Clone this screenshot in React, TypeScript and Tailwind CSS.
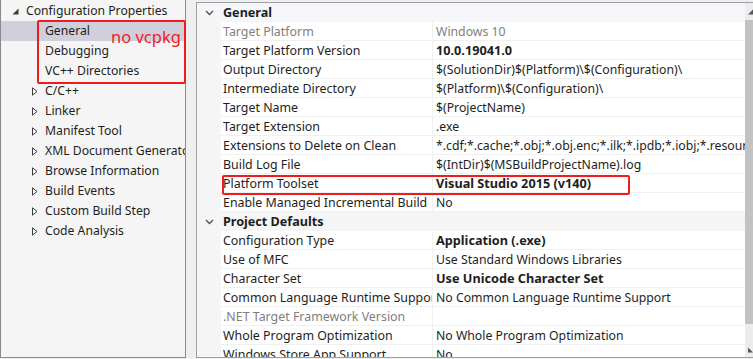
import React from "react";

const font = { fontFamily: '"Noto Sans", "Open Sans", sans-serif' };

function Collapsed() {
  return (
    <svg width="6" height="9" viewBox="0 0 6 9" className="shrink-0">
      <path d="M0.5 0.8 L5 4.5 L0.5 8.2 Z" fill="none" stroke="#3c3c3c" strokeWidth="1" />
    </svg>
  );
}

function Expanded() {
  return (
    <svg width="7" height="7" viewBox="0 0 7 7" className="shrink-0">
      <path d="M6.5 0.5 L6.5 6.5 L0.5 6.5 Z" fill="#3c3c3c" />
    </svg>
  );
}

function Chevron() {
  return (
    <svg width="9" height="6" viewBox="0 0 9 6">
      <path d="M1 1 L4.5 4.5 L8 1" fill="none" stroke="#555" strokeWidth="1.4" />
    </svg>
  );
}

type Row = { name: string; value: string; bold?: boolean; gray?: boolean; mark?: boolean };

const general: Row[] = [
  { name: "Target Platform", value: "Windows 10", gray: true },
  { name: "Target Platform Version", value: "10.0.19041.0", bold: true },
  { name: "Output Directory", value: "$(SolutionDir)$(Platform)\\$(Configuration)\\" },
  { name: "Intermediate Directory", value: "$(Platform)\\$(Configuration)\\" },
  { name: "Target Name", value: "$(ProjectName)" },
  { name: "Target Extension", value: ".exe" },
  { name: "Extensions to Delete on Clean", value: "*.cdf;*.cache;*.obj;*.obj.enc;*.ilk;*.ipdb;*.iobj;*.resources;*.tlb;*.tli;*.tlh;*.tmp" },
  { name: "Build Log File", value: "$(IntDir)$(MSBuildProjectName).log" },
  { name: "Platform Toolset", value: "Visual Studio 2015 (v140)", bold: true, mark: true },
  { name: "Enable Managed Incremental Build", value: "No" },
];

const defaults: Row[] = [
  { name: "Configuration Type", value: "Application (.exe)", bold: true },
  { name: "Use of MFC", value: "Use Standard Windows Libraries" },
  { name: "Character Set", value: "Use Unicode Character Set", bold: true },
  { name: "Common Language Runtime Support", value: "No Common Language Runtime Support" },
  { name: ".NET Target Framework Version", value: "", gray: true },
  { name: "Whole Program Optimization", value: "No Whole Program Optimization" },
  { name: "Windows Store App Support", value: "No" },
];

function Category({ title, bg }: { title: string; bg: string }) {
  return (
    <div className={`flex h-[19px] shrink-0 items-center ${bg}`}>
      <div className="flex w-[24px] justify-center pl-[1px]">
        <Chevron />
      </div>
      <div className="pl-[2px] text-[12.6px] font-bold leading-[19px] text-[#1e1e1e]">{title}</div>
    </div>
  );
}

function PropRow({ r }: { r: Row }) {
  return (
    <div className="relative flex h-[19px] shrink-0">
      <div className="w-[24px] shrink-0 bg-[#f5f5f5]" />
      <div
        className={`w-[212px] shrink-0 overflow-hidden whitespace-nowrap border-b border-r border-[#f0f0f0] bg-white pl-[2px] text-[12.4px] leading-[19px] ${
          r.gray ? "text-[#808080]" : "text-[#1e1e1e]"
        }`}
      >
        {r.name}
      </div>
      <div
        className={`min-w-0 flex-1 overflow-hidden whitespace-nowrap border-b border-[#f0f0f0] bg-white pl-[3px] leading-[19px] ${
          r.gray ? "text-[#808080]" : "text-[#1e1e1e]"
        } ${r.bold ? "text-[12.7px] font-bold" : "text-[12.25px]"}`}
      >
        {r.value}
      </div>
      {r.mark && (
        <div className="absolute left-[25px] top-[1px] z-10 h-[20px] w-[408px] rounded-[2px] border-2 border-[#f01c1c]" />
      )}
    </div>
  );
}

const tree = [
  "C/C++",
  "Linker",
  "Manifest Tool",
  "XML Document Generator",
  "Browse Information",
  "Build Events",
  "Custom Build Step",
  "Code Analysis",
];

export default function App() {
  return (
    <div className="flex h-[359px] w-[753px] overflow-hidden bg-[#efefef]" style={font}>
      {/* left tree */}
      <div className="relative h-[358px] w-[186px] shrink-0 border-x border-b border-[#8a8a8a] bg-[#f5f5f5] pt-[1px] text-[12.2px] text-[#1e1e1e]">
        <div className="flex h-[20px] items-center whitespace-nowrap">
          <div className="ml-[11px] mr-[7px] flex items-center">
            <Expanded />
          </div>
          <span className="leading-[20px]">Configuration Properties</span>
        </div>
        <div className="flex h-[20px] items-center bg-[#cfd0dc] pl-[44px] leading-[20px]">General</div>
        <div className="flex h-[20px] items-center pl-[44px] leading-[20px]">Debugging</div>
        <div className="flex h-[20px] items-center pl-[44px] leading-[20px]">VC++ Directories</div>
        {tree.map((t) => (
          <div key={t} className="flex h-[20px] items-center overflow-hidden whitespace-nowrap leading-[20px]">
            <div className="ml-[31px] mr-[7px] flex items-center">
              <Collapsed />
            </div>
            <span>{t}</span>
          </div>
        ))}
        <div className="absolute left-[36px] top-[20px] h-[64px] w-[149px] rounded-[2px] border-2 border-[#f01c1c]" />
        <div className="absolute left-[110px] top-[27px] text-[16.5px] leading-[20px] text-[#f01c1c]">no vcpkg</div>
      </div>

      <div className="w-[10px] shrink-0" />

      {/* property grid */}
      <div className="flex h-[358px] min-w-0 flex-1 flex-col pt-[2px]">
        <div className="flex min-h-0 flex-1 border-l border-t border-b border-[#a0a0a0]">
          <div className="flex min-w-0 flex-1 flex-col overflow-hidden">
            <Category title="General" bg="bg-[#f4f6fa]" />
            {general.map((r) => (
              <PropRow key={r.name} r={r} />
            ))}
            <Category title="Project Defaults" bg="bg-[#f5f5f5]" />
            {defaults.map((r) => (
              <PropRow key={r.name} r={r} />
            ))}
          </div>
          {/* scrollbar */}
          <div className="flex w-[8px] shrink-0 flex-col bg-[#ececec]">
            <div className="flex h-[17px] items-center justify-center pl-[3px]">
              <svg width="6" height="6" viewBox="0 0 6 6">
                <path d="M0 6 L6 0 L6 6 Z" fill="#555" />
              </svg>
            </div>
            <div className="h-[304px] bg-[#c2c2c2]" />
            <div className="flex flex-1 items-end justify-center pb-[4px] pl-[3px]">
              <svg width="6" height="6" viewBox="0 0 6 6">
                <path d="M0 0 L6 6 L0 6 Z" fill="#555" />
              </svg>
            </div>
          </div>
        </div>
      </div>
    </div>
  );
}
